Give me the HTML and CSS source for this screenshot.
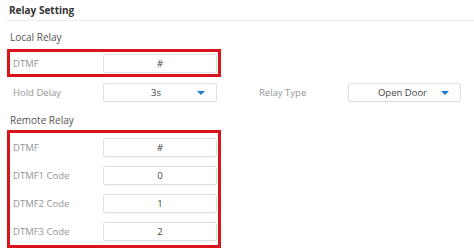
FILE: index.html
```html
<!DOCTYPE html>
<html lang="en">
<head>
    <meta charset="UTF-8">
    <meta name="viewport" content="width=device-width, initial-scale=1.0">
    <title>Relay Setting</title>
    <link rel="stylesheet" href="styles.css">
</head>
<body>
    <div class="panel">
        <h2 class="panel-title">Relay Setting</h2>

        <div class="section-title first">Local Relay</div>
        <div class="boxed single">
            <div class="row">
                <span class="label">DTMF</span>
                <div class="field">#</div>
            </div>
        </div>
        <div class="row plain">
            <span class="label">Hold Delay</span>
            <div class="field select">3s<span class="arrow"></span></div>
            <span class="label second">Relay Type</span>
            <div class="field select wide">Open Door<span class="arrow"></span></div>
        </div>

        <div class="section-title">Remote Relay</div>
        <div class="boxed">
            <div class="row">
                <span class="label">DTMF</span>
                <div class="field">#</div>
            </div>
            <div class="row">
                <span class="label">DTMF1 Code</span>
                <div class="field">0</div>
            </div>
            <div class="row">
                <span class="label">DTMF2 Code</span>
                <div class="field">1</div>
            </div>
            <div class="row">
                <span class="label">DTMF3 Code</span>
                <div class="field">2</div>
            </div>
        </div>
    </div>
</body>
</html>
```

FILE: styles.css
```css
body {
    margin: 0;
    background-color: #fff;
    font-family: "Open Sans", "Liberation Sans", sans-serif;
    font-size: 9.5px;
    font-stretch: 90%;
}

.panel {
    width: 474px;
    height: 248px;
    overflow: hidden;
    padding-left: 5px;
    box-sizing: border-box;
}

.panel-title {
    margin: 0;
    height: 20px;
    line-height: 20px;
    padding-left: 4px;
    font-size: 10px;
    font-weight: 700;
    color: #333;
    border-bottom: 1px solid #ececec;
}

.section-title {
    padding: 4px 0 0 5px;
    line-height: 20px;
    color: #555;
    font-size: 10px;
}

.section-title.first {
    padding-top: 6px;
    padding-bottom: 2px;
}

.boxed {
    margin-left: 2px;
    width: 214px;
    border: 3px solid #d9141c;
    box-sizing: border-box;
}

.boxed.single .row {
    height: 22px;
}

.row {
    display: flex;
    align-items: center;
    height: 28px;
    padding-left: 3px;
}

.row.plain {
    padding-left: 8px;
    margin-top: 1px;
}

.label {
    width: 90px;
    color: #959595;
    white-space: nowrap;
}

.label.second {
    width: 89px;
    margin-left: 42px;
}

.field {
    position: relative;
    width: 114px;
    height: 19px;
    line-height: 18px;
    box-sizing: border-box;
    border: 1px solid #e0e0e0;
    border-radius: 2px;
    text-align: center;
    color: #444;
    box-shadow: 0 1px 1px rgba(0, 0, 0, 0.03);
}

.field.select {
    padding-right: 8px;
}

.field.wide {
    width: 113px;
    padding-right: 4px;
}

.arrow {
    position: absolute;
    right: 11px;
    top: 7px;
    width: 0;
    height: 0;
    border-left: 4px solid transparent;
    border-right: 4px solid transparent;
    border-top: 4px solid #1b7ad6;
}
```
